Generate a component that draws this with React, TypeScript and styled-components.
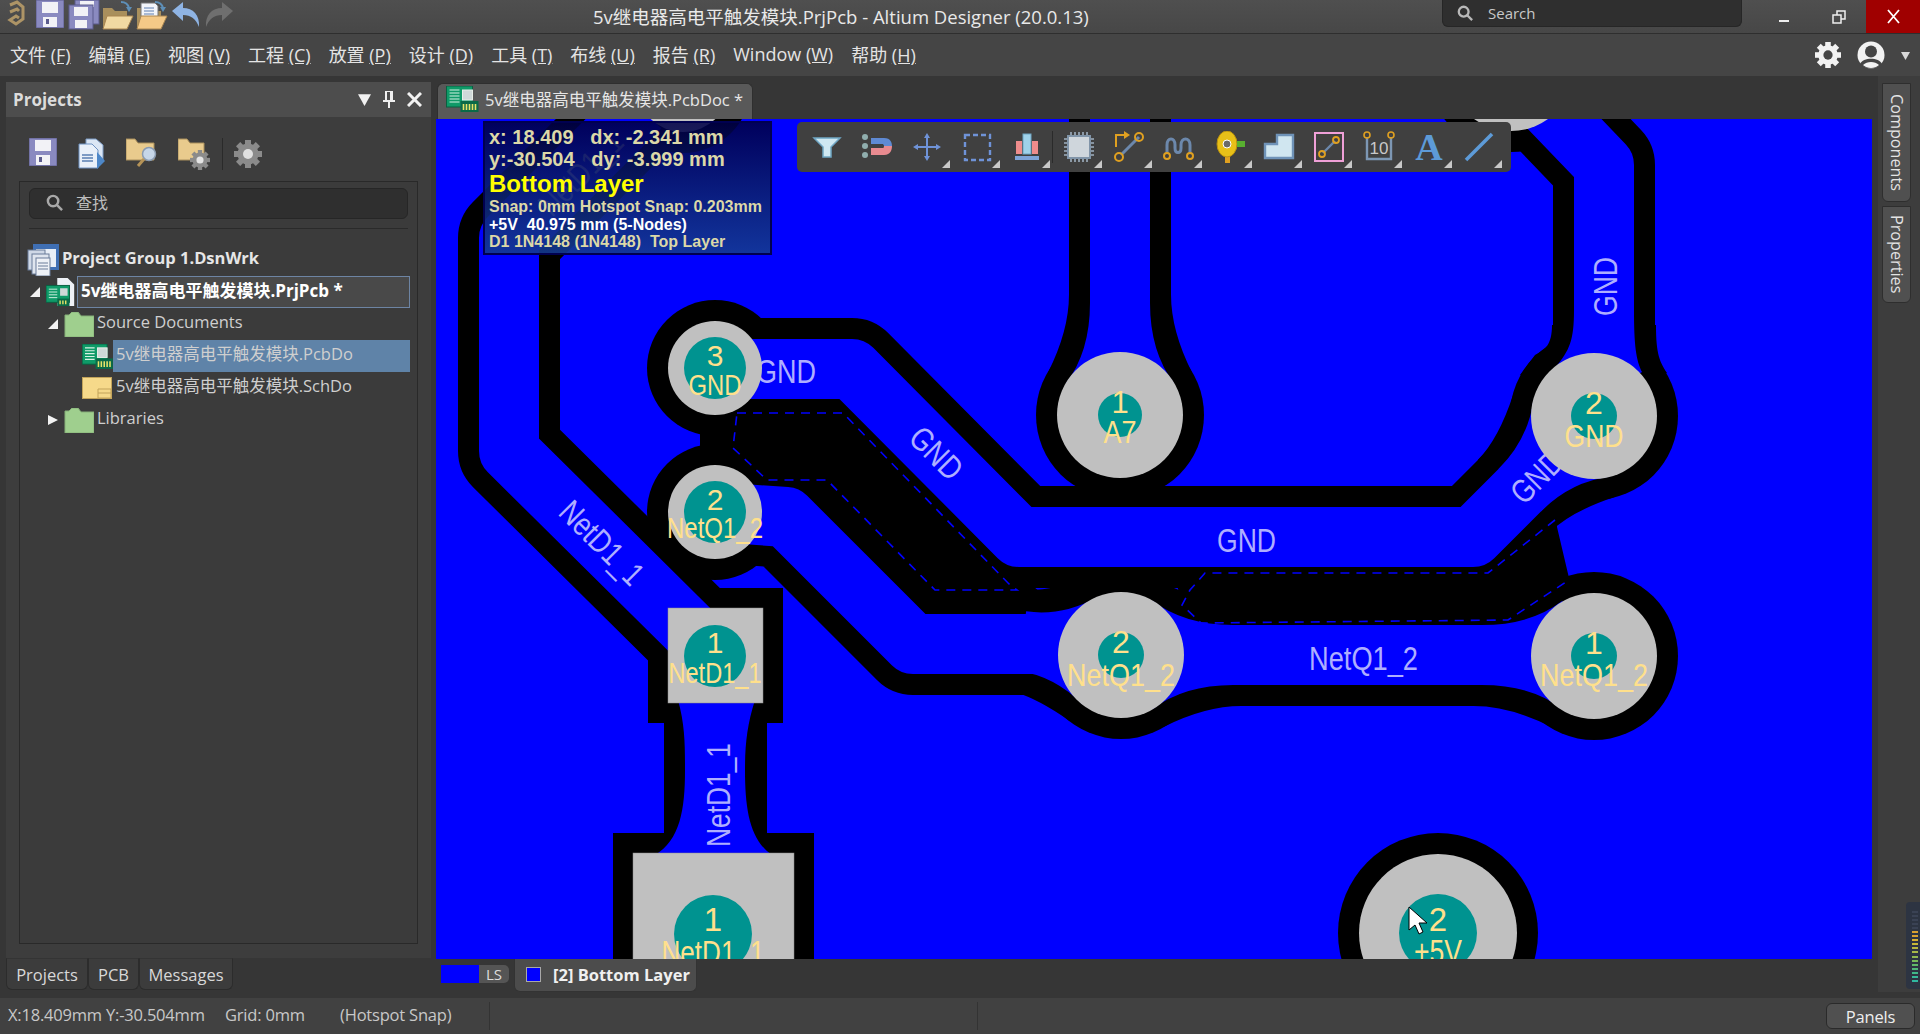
import styled, { createGlobalStyle } from "styled-components";

const UI = `"Open Sans", "Noto Sans CJK SC", sans-serif`;
const PCB_BLUE = "#0000ff";

const GlobalStyle = createGlobalStyle`
  html, body { margin: 0; padding: 0; background: #363636; }
  body { font-family: ${UI}; overflow: hidden; }
`;

const Screen = styled.div`
  width: 1920px;
  height: 1034px;
  display: flex;
  flex-direction: column;
  background: #363636;
  color: #e4e4e4;
  overflow: hidden;
`;

/* title bar */
const TitleBar = styled.div`
  height: 33px;
  flex: none;
  display: flex;
  background: linear-gradient(#4f4f4f, #474747);
  border-bottom: 1px solid #2e2e2e;
`;
const QuickBar = styled.div`
  width: 593px;
  flex: none;
  display: flex;
  align-items: flex-start;
  padding-left: 7px;
  box-sizing: border-box;
`;
const QuickIcon = styled.span<{ $w: number }>`
  width: ${(p) => p.$w}px;
  height: 30px;
  display: block;
  margin-right: 3px;
`;
const AppTitle = styled.div`
  font-size: 18.5px;
  line-height: 33px;
  color: #e8e8e8;
  white-space: nowrap;
`;
const SearchBox = styled.div`
  width: 300px;
  height: 27px;
  margin-left: auto;
  display: flex;
  align-items: center;
  gap: 15px;
  padding-left: 14px;
  box-sizing: border-box;
  background: #2f2f2f;
  border: 1px solid #262626;
  border-top: 0;
  border-radius: 0 0 6px 6px;
  font-size: 15px;
  color: #c8c8c8;
`;
const WindowControls = styled.div`
  width: 178px;
  display: flex;
  justify-content: flex-end;
`;
const WindowButton = styled.div<{ $close?: boolean }>`
  width: ${(p) => (p.$close ? 54 : 55)}px;
  display: flex;
  align-items: center;
  justify-content: center;
  background: ${(p) => (p.$close ? "#a00000" : "transparent")};
  color: #fff;
  font-size: 18px;
`;

/* menu bar */
const MenuBar = styled.div`
  height: 42px;
  flex: none;
  display: flex;
  align-items: center;
  padding-left: 10px;
  background: #454545;
  box-sizing: border-box;
`;
const MenuItem = styled.div`
  font-size: 18px;
  color: #e4e4e4;
  margin-right: 18px;
  padding-bottom: 2px;
  white-space: nowrap;
`;
const MenuRight = styled.div`
  margin-left: auto;
  display: flex;
  align-items: center;
  gap: 16px;
  padding-right: 10px;
`;

/* main area */
const Body = styled.div`
  flex: 1;
  display: flex;
  min-height: 0;
`;
const LeftColumn = styled.div`
  width: 436px;
  flex: none;
  display: flex;
  flex-direction: column;
  padding: 6px 5px 8px 6px;
  box-sizing: border-box;
`;
const Panel = styled.div`
  flex: 1;
  display: flex;
  flex-direction: column;
  background: #3d3d3d;
  min-height: 0;
`;
const PanelHeader = styled.div`
  height: 35px;
  flex: none;
  display: flex;
  align-items: center;
  padding: 0 9px 0 7px;
  background: #4d4d4d;
  font-size: 17px;
  font-weight: 700;
  color: #dcdcdc;
`;
const HeaderIcons = styled.div`
  margin-left: auto;
  display: flex;
  align-items: center;
  gap: 12px;
`;
const PanelTools = styled.div`
  height: 64px;
  flex: none;
  display: flex;
  align-items: center;
  padding: 10px 0 0 23px;
  box-sizing: border-box;
`;
const PanelTool = styled.span<{ $w: number }>`
  width: ${(p) => p.$w}px;
  height: 32px;
  display: block;
  margin-right: 20px;
`;
const ToolDivider = styled.span`
  width: 1px;
  height: 32px;
  margin: 0 11px 0 -8px;
  background: #2a2a2a;
`;
const TreeFrame = styled.div`
  flex: 1;
  margin: 0 13px 14px;
  border: 1px solid #292929;
  display: flex;
  flex-direction: column;
  background: #3b3b3b;
`;
const FindField = styled.div`
  height: 31px;
  flex: none;
  margin: 6px 9px 0;
  display: flex;
  align-items: center;
  gap: 13px;
  padding: 0 0 3px 16px;
  background: #2f2f2f;
  border: 1px solid #262626;
  border-radius: 6px;
  box-sizing: border-box;
  font-size: 16px;
  color: #bdbdbd;
`;
const FindRule = styled.div`
  height: 1px;
  flex: none;
  margin: 9px 9px 15px;
  background: #2a2a2a;
`;
const TreeRow = styled.div<{ $indent: number; $strong?: boolean; $large?: boolean }>`
  height: 32px;
  flex: none;
  display: flex;
  align-items: center;
  padding-left: ${(p) => p.$indent}px;
  font-size: ${(p) => (p.$large ? 17 : 16.5)}px;
  font-weight: ${(p) => (p.$strong ? 700 : 400)};
  color: ${(p) => (p.$strong ? "#e6e6e6" : "#cfcfcf")};
  white-space: nowrap;
`;
const Twist = styled.span<{ $open?: boolean }>`
  width: 10px;
  height: 10px;
  flex: none;
  margin-right: 6px;
  background: #f2f2f2;
  clip-path: ${(p) =>
    p.$open
      ? "polygon(100% 0, 100% 100%, 0 100%)"
      : "polygon(0 0, 100% 50%, 0 100%)"};
`;
const TreeIcon = styled.span<{ $w: number }>`
  width: ${(p) => p.$w}px;
  height: 30px;
  flex: none;
  display: flex;
  align-items: center;
`;
const TreeLabel = styled.div<{ $kind?: "focus" | "selected" }>`
  flex: ${(p) => (p.$kind ? 1 : "none")};
  height: 100%;
  display: flex;
  align-items: center;
  margin-right: ${(p) => (p.$kind ? "7px" : "0")};
  padding: 0 0 6px 3px;
  box-sizing: border-box;
  color: ${(p) => (p.$kind === "focus" ? "#fff" : "inherit")};
  background: ${(p) =>
    p.$kind === "focus"
      ? "#494949"
      : p.$kind === "selected"
        ? "#5f83a8"
        : "transparent"};
  border: ${(p) => (p.$kind === "focus" ? "1px solid #6d84a3" : "0")};
`;
const BottomTabs = styled.div`
  height: 32px;
  flex: none;
  display: flex;
`;
const BottomTab = styled.div<{ $w: number }>`
  width: ${(p) => p.$w}px;
  display: flex;
  align-items: center;
  justify-content: center;
  box-sizing: border-box;
  font-size: 16.5px;
  color: #d8d8d8;
  background: #3c3c3c;
  border: 1px solid #2c2c2c;
  border-top-color: #343434;
  border-radius: 0 0 6px 6px;
`;

const CenterColumn = styled.div`
  width: 1436px;
  flex: none;
  display: flex;
  flex-direction: column;
  padding-top: 7px;
  box-sizing: border-box;
`;
const DocStrip = styled.div`
  height: 36px;
  flex: none;
  display: flex;
`;
const DocTab = styled.div`
  margin-left: 1px;
  width: 316px;
  display: flex;
  align-items: center;
  gap: 6px;
  padding: 0 0 5px 8px;
  box-sizing: border-box;
  background: #595959;
  border: 1px solid #2f2f2f;
  border-bottom: 0;
  border-radius: 6px 6px 0 0;
  font-size: 16.5px;
  color: #e6e6e6;
  white-space: nowrap;
`;
const Canvas = styled.div`
  height: 840px;
  flex: none;
  position: relative;
  overflow: hidden;
  background: ${PCB_BLUE};
`;
const BoardSvg = styled.svg`
  display: block;
  width: 1436px;
  height: 840px;
`;
const NetLabel = styled.text`
  font-family: "Liberation Sans", sans-serif;
  fill: #aeaeff;
`;
const PadLabel = styled.text`
  font-family: "Liberation Sans", sans-serif;
  fill: #ffe08c;
`;

const HeadsUp = styled.div`
  position: absolute;
  left: 47px;
  top: 2px;
  width: 289px;
  height: 134px;
  box-sizing: border-box;
  padding: 3px 0 0 4px;
  border: 2px solid #000050;
  background: linear-gradient(rgba(0, 0, 70, 0.88), rgba(20, 58, 145, 0.9));
  font-family: "Liberation Sans", sans-serif;
  font-weight: 700;
  color: #dcd8a8;
  white-space: pre;
`;
const HudLine = styled.div<{ $size: number; $height: number; $color?: string }>`
  font-size: ${(p) => p.$size}px;
  line-height: ${(p) => p.$height}px;
  color: ${(p) => p.$color || "inherit"};
`;

const Toolbar = styled.div`
  position: absolute;
  left: 361px;
  top: 3px;
  height: 50px;
  display: flex;
  align-items: center;
  padding: 0 7px 0 5px;
  border-radius: 5px;
  background: #404040;
`;
const ToolCell = styled.div<{ $corner?: boolean }>`
  width: 50px;
  height: 50px;
  display: flex;
  align-items: center;
  justify-content: center;
  position: relative;
  &::after {
    content: "";
    display: ${(p) => (p.$corner ? "block" : "none")};
    position: absolute;
    right: 2px;
    bottom: 4px;
    width: 8px;
    height: 8px;
    background: #c9c9c9;
    clip-path: polygon(100% 0, 100% 100%, 0 100%);
  }
`;
const ToolSep = styled.div`
  width: 1px;
  height: 32px;
  margin: 0 1px 0 0;
  background: #2a2a2a;
`;
const ToolSlot = styled.div`
  display: contents;
`;

const LayerStrip = styled.div`
  height: 39px;
  flex: none;
  display: flex;
  padding-left: 5px;
`;
const LayerSwatch = styled.div`
  width: 38px;
  height: 18px;
  margin-top: 6px;
  background: ${PCB_BLUE};
`;
const LsButton = styled.div`
  width: 30px;
  height: 18px;
  margin: 6px 5px 0 0;
  display: flex;
  align-items: center;
  justify-content: center;
  background: #555;
  border-radius: 0 5px 5px 0;
  font-size: 15px;
  color: #ddd;
`;
const LayerTab = styled.div`
  width: 183px;
  height: 33px;
  display: flex;
  align-items: center;
  gap: 12px;
  padding: 0 0 2px 11px;
  box-sizing: border-box;
  background: #4c4c4c;
  border: 1px solid #333;
  border-top: 0;
  border-radius: 0 0 6px 6px;
  font-size: 16.5px;
  font-weight: 700;
  color: #f0f0f0;
  white-space: nowrap;
`;
const LayerDot = styled.span`
  width: 15px;
  height: 15px;
  flex: none;
  box-sizing: border-box;
  background: ${PCB_BLUE};
  border: 1px solid #a8a8a8;
`;

const Rail = styled.div`
  flex: 1;
  margin: 0 0 6px 6px;
  display: flex;
  flex-direction: column;
  align-items: flex-start;
  gap: 4px;
  padding: 7px 0 3px 4px;
  background: #3d3d3d;
`;
const RailTab = styled.div<{ $h: number }>`
  width: 29px;
  height: ${(p) => p.$h}px;
  flex: none;
  box-sizing: border-box;
  display: flex;
  align-items: center;
  justify-content: center;
  writing-mode: vertical-rl;
  background: #505050;
  border: 1px solid #2e2e2e;
  border-radius: 0 0 6px 6px;
  font-size: 16.2px;
  color: #e4e4e4;
`;
const Meter = styled.div`
  margin: auto 0 0 24px;
  width: 14px;
  height: 87px;
  flex: none;
  box-sizing: border-box;
  padding: 9px 2px 7px 6px;
  display: flex;
  flex-direction: column;
  justify-content: space-between;
  background: #2d3442;
  border-radius: 4px 0 0 4px;
`;
const MeterTick = styled.span<{ $color: string }>`
  height: 2px;
  background: ${(p) => p.$color};
`;

const StatusBar = styled.div`
  height: 36px;
  flex: none;
  display: flex;
  align-items: center;
  background: #414141;
  font-size: 16.5px;
  color: #c8c8c8;
  letter-spacing: -0.2px;
  white-space: nowrap;
`;
const StatusText = styled.span<{ $w: number; $pad?: number }>`
  width: ${(p) => p.$w}px;
  flex: none;
  box-sizing: border-box;
  padding: 0 0 3px ${(p) => p.$pad || 0}px;
`;
const StatusDivider = styled.span<{ $w: number }>`
  width: ${(p) => p.$w}px;
  height: 28px;
  flex: none;
  box-sizing: border-box;
  border-left: 1px solid #333;
`;
const PanelsButton = styled.div`
  width: 89px;
  height: 26px;
  margin: 0 5px 0 auto;
  display: flex;
  align-items: center;
  justify-content: center;
  background: #505050;
  border: 1px solid #2a2a2a;
  border-radius: 6px;
  box-sizing: border-box;
  color: #eee;
`;

/* ---- icons ---- */
const SaveIcon = () => (
  <svg width="28" height="28" viewBox="0 0 28 28">
    <rect x="0" y="0" width="28" height="28" fill="#8a8ac0" stroke="#5b5b8c" />
    <rect x="6" y="2" width="16" height="11" fill="#f2f2f6" />
    <rect x="7" y="17" width="14" height="10" fill="#f2f2f6" />
    <rect x="10" y="19" width="3" height="5" fill="#5b5b8c" />
  </svg>
);
const SaveAllIcon = () => (
  <svg width="32" height="30" viewBox="0 0 32 30">
    <rect x="7" y="0" width="24" height="24" fill="#8a8ac0" stroke="#5b5b8c" />
    <rect x="12" y="1" width="14" height="6" fill="#f2f2f6" />
    <rect x="1" y="5" width="24" height="24" fill="#8a8ac0" stroke="#5b5b8c" />
    <rect x="6" y="7" width="14" height="9" fill="#f2f2f6" />
    <rect x="7" y="20" width="12" height="8" fill="#f2f2f6" />
  </svg>
);
const FolderOpen = ({ doc }: { doc?: boolean }) => (
  <svg width="32" height="30" viewBox="0 0 32 30">
    <path d="M1 8h9l3 3h12v17H1z" fill="#a98f5c" />
    {doc && <path d="M5 3h14l3 3v15H5z" fill="#f3f5fa" stroke="#777" />}
    {doc && <path d="M8 8h10M8 11h10M8 14h10" stroke="#5e7fb0" />}
    <path d="M5 16h26l-6 13H1z" fill={doc ? "#f4c987" : "#f1d9a2"} stroke="#a98550" />
    <path d="M19 2c4 0 7 2 8 6" fill="none" stroke="#5d8fb8" strokeWidth="2" />
    <path d="M24 7l6 0-3 5z" fill="#5d8fb8" />
  </svg>
);
const ArrowIcon = ({ color, flip }: { color: string; flip?: boolean }) => (
  <svg width="30" height="28" viewBox="0 0 30 28" style={flip ? { transform: "scaleX(-1)" } : undefined}>
    <path d="M1 11 12 2v6c10 0 17 7 16 19-3-8-8-12-16-12v6z" fill={color} />
  </svg>
);
const Logo = () => (
  <svg width="18" height="26" viewBox="0 0 18 26" fill="none" stroke="#ad9466" strokeWidth="3">
    <path d="M3 5l7-3 6 5v12l-7 5-6-4 6-4 3 2" />
    <path d="M3 12l7-3 2 2" />
  </svg>
);
const SearchGlass = ({ color, size }: { color: string; size: number }) => (
  <svg width={size} height={size} viewBox="0 0 18 18" fill="none" stroke={color} strokeWidth="2.6">
    <circle cx="7.5" cy="7.5" r="5.5" />
    <path d="M11.5 11.5 17 17" />
  </svg>
);
const Gear = ({ color, size, ring }: { color: string; size: number; ring?: string }) => (
  <svg width={size} height={size} viewBox="0 0 28 28">
    <g fill={color}>
      {[0, 45, 90, 135, 180, 225, 270, 315].map((a) => (
        <rect key={a} x="11" y="0" width="6" height="8" transform={`rotate(${a} 14 14)`} />
      ))}
      <circle cx="14" cy="14" r="10.5" />
    </g>
    <circle cx="14" cy="14" r="5" fill={ring || "#454545"} />
  </svg>
);
const UserIcon = () => (
  <svg width="28" height="28" viewBox="0 0 28 28">
    <circle cx="14" cy="14" r="13.5" fill="#f2f2f2" />
    <circle cx="14" cy="10.5" r="6" fill="#454545" />
    <path d="M3 23c3-7 19-7 22 0-5 6-17 6-22 0z" fill="#454545" />
    <path d="M6 24c4-4 12-4 16 0-4 4-12 4-16 0z" fill="#f2f2f2" />
  </svg>
);
const PcbIcon = ({ w = 33, h = 26 }: { w?: number; h?: number }) => (
  <svg width={w} height={h} viewBox="0 0 32 26">
    <rect x="0" y="0" width="26" height="21" fill="#0f9a68" stroke="#0a5f40" />
    <path d="M3 4h10M3 7h10M3 10h10M3 13h10M3 16h10" stroke="#d6f2e4" strokeWidth="1.2" />
    <rect x="16" y="4" width="10" height="10" fill="#cfd8d8" stroke="#e8eee8" />
    <rect x="14" y="15" width="18" height="11" fill="#0a6a48" />
    <path d="M17 18v6M20 18v6M23 18v6M26 18v6M29 18v6" stroke="#e8e468" strokeWidth="1.6" />
  </svg>
);
const GreenFolder = () => (
  <svg width="30" height="25" viewBox="0 0 30 25">
    <path d="M1 3h4l3-3h6l3 4h13v21H1z" fill="#9fcf8e" stroke="#86b078" />
  </svg>
);
const SchIcon = () => (
  <svg width="30" height="22" viewBox="0 0 30 22">
    <rect x="0.5" y="0.5" width="29" height="21" fill="#f6d98a" stroke="#c2a35a" />
    <path d="M16 12h13v9H16zM16 16h13" fill="none" stroke="#c2a35a" />
  </svg>
);
const GroupIcon = () => (
  <svg width="32" height="32" viewBox="0 0 32 32">
    <rect x="6" y="0" width="26" height="26" fill="#3f6fb4" />
    <rect x="9" y="5" width="20" height="18" fill="#e8eef6" />
    <rect x="1" y="6" width="17" height="20" fill="#cfd8e6" stroke="#6b7c99" />
    <rect x="5" y="10" width="17" height="20" fill="#dfe5ee" stroke="#6b7c99" />
    <rect x="9" y="14" width="14" height="18" fill="#eef1f6" stroke="#6b7c99" />
    <path d="M11 19h10M11 22h10M11 25h10" stroke="#6b7c99" />
  </svg>
);
const ProjectIcon = () => (
  <svg width="33" height="30" viewBox="0 0 33 30">
    <path d="M12 0h11l7 7v23H12z" fill="#eef1f6" />
    <g transform="translate(0 8)">
      <rect x="0" y="0" width="25" height="18" fill="#0f9a68" stroke="#0a5f40" />
      <path d="M3 4h9M3 7h9M3 10h9M3 13h9" stroke="#d6f2e4" />
      <rect x="15" y="3" width="8" height="8" fill="#cfd8d8" />
      <rect x="12" y="14" width="13" height="8" fill="#0a6a48" />
      <path d="M15 16v4M18 16v4M21 16v4" stroke="#e8e468" strokeWidth="1.5" />
    </g>
  </svg>
);
const DocsIcon = () => (
  <svg width="28" height="32" viewBox="0 0 28 32">
    <path d="M8 1h10l7 6v15H8z" fill="#dbe6f4" stroke="#7d9cc6" />
    <path d="M1 6h13l6 6v18H1z" fill="#e9f0f9" stroke="#6f92c2" />
    <path d="M4 17h11M4 20h11M4 23h11" stroke="#5a7fb2" strokeWidth="1.3" />
    <path d="M19 14l8 9-8 8z" fill="#4d87c8" />
  </svg>
);
const FolderSearch = () => (
  <svg width="32" height="32" viewBox="0 0 32 32">
    <path d="M0 1h9l3 4h16v17H0z" fill="#e9cb8d" stroke="#a98f5c" />
    <circle cx="23" cy="16" r="6.5" fill="#c6d6e8" stroke="#8a9bb0" strokeWidth="1.5" />
    <path d="M18 21l-6 7" stroke="#b59357" strokeWidth="3" />
  </svg>
);
const FolderGear = () => (
  <svg width="32" height="32" viewBox="0 0 32 32">
    <path d="M0 1h9l3 4h14v17H0z" fill="#e9cb8d" stroke="#a98f5c" />
    <g transform="translate(12 12)">
      <Gear color="#8b8b8b" size={20} ring="#e4e4e4" />
    </g>
  </svg>
);
const PinIcon = () => (
  <svg width="12" height="17" viewBox="0 0 12 17">
    <path d="M2 0h8v9h2v2H0V9h2z M5 11h2v6H5z" fill="#f0f0f0" />
    <rect x="4" y="1" width="3" height="8" fill="#4d4d4d" />
  </svg>
);
const CloseCross = () => (
  <svg width="15" height="15" viewBox="0 0 15 15" stroke="#f2f2f2" strokeWidth="3">
    <path d="M1 1 14 14M14 1 1 14" />
  </svg>
);
const DownTri = ({ size, color }: { size: number; color: string }) => (
  <svg width={size} height={size} viewBox="0 0 10 10">
    <path d="M0 1h10L5 10z" fill={color} />
  </svg>
);

const toolIcons = [
  <g key="filter">
    <path d="M3 7h26L20 16v10h-8V16z" fill="#cfe8f2" stroke="#6fa6c4" strokeWidth="1.5" />
  </g>,
  <g key="magnet" fill="none">
    <circle cx="4" cy="6" r="3" fill="#90aeae" />
    <circle cx="4" cy="15" r="3" fill="#90aeae" />
    <circle cx="4" cy="24" r="3" fill="#90aeae" />
    <path d="M10 7h13c7 0 8 5 8 8H23c0-1-1-2-1-2H10z" fill="#5f8ad4" />
    <path d="M10 17h12c0 0 1 0 1-2h8c0 3-1 9-8 9H10z" fill="#e88a90" />
  </g>,
  <g key="cross" stroke="#6f93d8" strokeWidth="2" fill="#6f93d8">
    <path d="M4 16h24M16 4v24" />
    <path d="M2 16l5-3v6zM30 16l-5-3v6zM16 2l-3 5h6zM16 30l-3-5h6z" stroke="none" />
  </g>,
  <rect key="sel" x="4" y="4" width="25" height="25" fill="none" stroke="#6f93d8" strokeWidth="2.4" strokeDasharray="5 3" />,
  <g key="align">
    <rect x="5" y="10" width="6" height="13" fill="#ee8c8c" />
    <rect x="12" y="3" width="8" height="20" fill="#9fd2ea" stroke="#6fa6c4" />
    <rect x="21" y="10" width="6" height="13" fill="#ee8c8c" />
    <rect x="4" y="25" width="24" height="4" fill="#7ea4d8" />
  </g>,
  <g key="chip">
    <path d="M8 1v30M12 1v30M16 1v30M20 1v30M24 1v30M1 8h30M1 12h30M1 16h30M1 20h30M1 24h30" stroke="#9fb0c0" strokeWidth="1.6" />
    <rect x="5" y="5" width="22" height="22" fill="#cfd6dc" stroke="#8094a8" strokeWidth="2" />
  </g>,
  <g key="route" fill="none">
    <path d="M8 24 26 6" stroke="#6c88ac" strokeWidth="3" />
    <circle cx="6" cy="26" r="4" stroke="#e0a020" strokeWidth="2" />
    <circle cx="26" cy="6" r="4" stroke="#e0a020" strokeWidth="2" />
    <path d="M3 16V4h9" stroke="#e0a020" strokeWidth="2" />
    <path d="M11 0l6 4-6 4z" fill="#e0a020" />
  </g>,
  <g key="wave" fill="none">
    <path d="M4 22V14c0-8 8-8 8 0v3c0 6 6 6 6 0v-3c0-8 9-8 9 0v8" stroke="#6c88ac" strokeWidth="3" />
    <circle cx="4" cy="25" r="3" stroke="#e0a020" strokeWidth="2" />
    <circle cx="27" cy="25" r="3" stroke="#e0a020" strokeWidth="2" />
  </g>,
  <g key="via">
    <rect x="12" y="22" width="5" height="10" fill="#e0a020" />
    <ellipse cx="14" cy="13" rx="10" ry="13" fill="#e8c018" stroke="#b89010" />
    <circle cx="14" cy="13" r="4" fill="#6a6a6a" stroke="#fff" />
    <rect x="24" y="10" width="8" height="6" fill="#58b030" />
  </g>,
  <path key="poly" d="M2 27V13h12V4h16v23z" fill="#d0e6f0" stroke="#6f93b8" strokeWidth="2.4" />,
  <g key="rule" fill="none">
    <rect x="2" y="2" width="28" height="28" stroke="#f0a0d8" strokeWidth="2" />
    <path d="M10 22 22 10" stroke="#6c88ac" strokeWidth="2.4" />
    <circle cx="9" cy="23" r="3" stroke="#e0a020" strokeWidth="1.8" />
    <circle cx="23" cy="9" r="3" stroke="#e0a020" strokeWidth="1.8" />
  </g>,
  <g key="dim" fill="none">
    <path d="M4 6v22h24V6" stroke="#7d97b4" strokeWidth="2.4" />
    <circle cx="4" cy="4" r="3" stroke="#e0a020" strokeWidth="1.6" />
    <circle cx="28" cy="4" r="3" stroke="#e0a020" strokeWidth="1.6" />
    <text x="16" y="23" textAnchor="middle" fontSize="17" fontFamily="Liberation Sans" fill="#c8c8c8" stroke="none">10</text>
  </g>,
  <text key="a" x="16" y="29" textAnchor="middle" fontSize="38" fontWeight="700" fontFamily="Liberation Serif" fill="#5d9bd8">A</text>,
  <path key="line" d="M3 29 29 3" stroke="#5d9bd8" strokeWidth="3.6" />,
];

/* ---- board ---- */
const gndMain = "M715 369 L852 369 L1019 537 L1473 537 L1594 416";
const gndUp = "M1594 416 L1604 385 L1604 165 L1511 68";
const a7Trace = "M1120 415 L1120 100";
const netQLeft = "M715 512 L786 517 L913 644 L1040 644 L1121 655";
const netQRight = "M1121 655 L1594 655";
const netDLong = "M715 655 L509 451 L509 238 L640 107";
const traces = [gndMain, gndUp, a7Trace, netQLeft, netQRight, netDLong];

const tears = [
  { x: 1120, y: 415, r: 63, len: 112, rot: -90 },
  { x: 1594, y: 416, r: 63, len: 105, rot: 135 },
  { x: 1121, y: 655, r: 63, len: 112, rot: 0 },
  { x: 1121, y: 655, r: 63, len: 100, rot: 188 },
  { x: 1594, y: 655, r: 63, len: 112, rot: 180 },
];

const Tear = ({ x, y, r, len, rot, grow, fill }: { x: number; y: number; r: number; len: number; rot: number; grow: number; fill: string }) => {
  const R = r + grow;
  const hw = 30 + grow;
  const L = len + grow * 0.4;
  return (
    <path
      transform={`translate(${x} ${y}) rotate(${rot})`}
      fill={fill}
      d={`M${R * 0.5} ${-R * 0.86} Q${R} ${-hw} ${L} ${-hw} L${L} ${hw} Q${R} ${hw} ${R * 0.5} ${R * 0.86} Z`}
    />
  );
};

type PadData = { x: number; y: number; r: number; hole: number; num?: string; name?: string; w?: number; fs?: number; square?: boolean; dn?: number };
const pads: PadData[] = [
  { x: 683, y: 85, r: 47, hole: 31 },
  { x: 1511, y: 68, r: 63, hole: 23 },
  { x: 715, y: 368, r: 47, hole: 31, num: "3", name: "GND", w: 53, fs: 30, dn: 27 },
  { x: 715, y: 512, r: 47, hole: 31, num: "2", name: "NetQ1_2", w: 96, fs: 30, dn: 26 },
  { x: 715, y: 655, r: 47, hole: 31, num: "1", name: "NetD1_1", w: 93, fs: 30, dn: 28, square: true },
  { x: 713, y: 933, r: 80, hole: 39, num: "1", name: "NetD1_1", w: 103, fs: 33, dn: 31, square: true },
  { x: 1120, y: 415, r: 63, hole: 22, num: "1", name: "A7", w: 33, fs: 31, dn: 28 },
  { x: 1594, y: 416, r: 63, hole: 23, num: "2", name: "GND", w: 59, fs: 32, dn: 31 },
  { x: 1121, y: 655, r: 63, hole: 23, num: "2", name: "NetQ1_2", w: 108, fs: 32, dn: 31 },
  { x: 1594, y: 656, r: 63, hole: 23, num: "1", name: "NetQ1_2", w: 108, fs: 32, dn: 30 },
  { x: 1438, y: 933, r: 79, hole: 39, num: "2", name: "+5V", w: 48, fs: 33, dn: 30 },
];

const Label = ({ x, y, rot, text, w, fs = 33 }: { x: number; y: number; rot: number; text: string; w: number; fs?: number }) => (
  <NetLabel
    transform={`translate(${x} ${y}) rotate(${rot})`}
    fontSize={fs}
    textLength={w}
    lengthAdjust="spacingAndGlyphs"
  >
    {text}
  </NetLabel>
);

const Board = () => (
  <BoardSvg viewBox="436 119 1436 840">
    <rect x="436" y="119" width="1436" height="840" fill={PCB_BLUE} />
    {/* clearance */}
    <g fill="#000">
      {traces.map((d) => (
        <path key={d} d={d} fill="none" stroke="#000" strokeWidth="102" strokeLinejoin="round" />
      ))}
      {tears.map((t, i) => (
        <Tear key={i} {...t} grow={21} fill="#000" />
      ))}
      {pads.map((p) =>
        p.square ? (
          <rect key={p.x + "-" + p.y} x={p.x - p.r - 20} y={p.y - p.r - 20} width={(p.r + 20) * 2 + 1} height={(p.r + 20) * 2 + 1} />
        ) : (
          <circle key={p.x + "-" + p.y} cx={p.x} cy={p.y} r={p.r + 21} />
        ),
      )}
      <rect x="700" y="425" width="60" height="35" />
      <path d="M725 399 L842 399 L1010 567 L1040 592 L925 613 L805 492 L735 487 Z" />
      <path d="M1170 560 L1495 560 L1555 497 L1557 527 L1569 578 L1530 612 L1500 632 L1190 632 Z" />
      <path d="M664 703 H767 V853 H664 Z" />
      <path d="M1552 325 C1552 345 1545 350 1535 355 L1520 375 L1600 400 L1667 373 C1660 362 1656 355 1656 325 Z" />
    </g>
    {/* copper */}
    {traces.map((d) => (
      <path key={d} d={d} fill="none" stroke={PCB_BLUE} strokeWidth="60" strokeLinejoin="round" />
    ))}
    {tears.map((t, i) => (
      <Tear key={i} {...t} grow={0} fill={PCB_BLUE} />
    ))}
    <path fill={PCB_BLUE} d="M1574 310 C1574 340 1570 350 1555 368 L1600 400 L1642 372 C1636 360 1634 345 1634 310 Z" />
    <path fill={PCB_BLUE} d="M678 700 C685 725 685 745 685 770 C685 810 680 840 655 855 L772 855 C750 840 745 810 745 770 C745 745 747 725 755 700 Z" />
    <g fill="none" stroke={PCB_BLUE} strokeWidth="1.6" strokeDasharray="9 7">
      <path d="M737 413 L843 413 L1009 584 L1017 590 L935 590 L827 480 L767 480 L733 448 Z" />
      <path d="M1555 520 L1488 573 L1205 573 L1190 590 L1182 605 L1201 623 L1508 620 L1569 580" />
    </g>
    {/* net names */}
    <Label x={756} y={383} rot={0} text="GND" w={60} />
    <Label x={907} y={440} rot={45} text="GND" w={60} />
    <Label x={1217} y={552} rot={0} text="GND" w={59} />
    <Label x={1309} y={670} rot={0} text="NetQ1_2" w={109} />
    <Label x={1617} y={316} rot={-90} text="GND" w={59} />
    <Label x={1524} y={506} rot={-45} text="GND" w={59} />
    <Label x={730} y={847} rot={-90} text="NetD1_1" w={104} />
    <Label x={557} y={514} rot={45} text="NetD1_1" w={104} />
    <Label x={552} y={218} rot={-45} text="NetD1_1" w={104} />
    {/* pads */}
    {pads.map((p) => (
      <g key={p.x + "-" + p.y}>
        {p.square ? (
          <rect x={p.x - p.r} y={p.y - p.r} width={p.r * 2 + 1} height={p.r * 2 + 1} fill="#c0c0c0" stroke="#8a8a8a" strokeWidth="0.5" />
        ) : (
          <circle cx={p.x} cy={p.y} r={p.r} fill="#c0c0c0" />
        )}
        <circle cx={p.x} cy={p.y + (p.square ? 1 : 0)} r={p.hole} fill="#009390" />
        {p.num && (
          <PadLabel x={p.x} y={p.y - 2} fontSize={p.fs} textAnchor="middle">
            {p.num}
          </PadLabel>
        )}
        {p.name && (
          <PadLabel
            x={p.x - (p.w || 0) / 2}
            y={p.y + (p.dn || 27)}
            fontSize={p.fs}
            textLength={p.w}
            lengthAdjust="spacingAndGlyphs"
          >
            {p.name}
          </PadLabel>
        )}
      </g>
    ))}
    {/* mouse pointer */}
    <path d="M1409 907 V930 L1415 925 L1419 934 L1423 932 L1419 923 L1427 923 Z" fill="#fff" stroke="#000" strokeWidth="1" />
  </BoardSvg>
);

const menus: [string, string][] = [
  ["文件 ", "(F)"],
  ["编辑 ", "(E)"],
  ["视图 ", "(V)"],
  ["工程 ", "(C)"],
  ["放置 ", "(P)"],
  ["设计 ", "(D)"],
  ["工具 ", "(T)"],
  ["布线 ", "(U)"],
  ["报告 ", "(R)"],
  ["Window ", "(W)"],
  ["帮助 ", "(H)"],
];

const meterColors = [
  "#3a4254", "#3a4254", "#3a4254", "#3a4254", "#3a4254",
  "#d8a030", "#d8a030", "#d8b030", "#c8b838", "#b8b840", "#a8b848", "#90b850",
  "#78b858", "#60b868", "#50b878", "#40b888", "#38b898", "#30b8a0",
];

const App = () => {
  const cornerless = 2;
  return (
    <Screen>
      <GlobalStyle />
      <TitleBar>
        <QuickBar>
          <QuickIcon $w={26}><Logo /></QuickIcon>
          <QuickIcon $w={29}><SaveIcon /></QuickIcon>
          <QuickIcon $w={31}><SaveAllIcon /></QuickIcon>
          <QuickIcon $w={31}><FolderOpen /></QuickIcon>
          <QuickIcon $w={32}><FolderOpen doc /></QuickIcon>
          <QuickIcon $w={30}><ArrowIcon color="#8fb4e4" /></QuickIcon>
          <QuickIcon $w={30}><ArrowIcon color="#6f6f6f" flip /></QuickIcon>
        </QuickBar>
        <AppTitle>5v继电器高电平触发模块.PrjPcb - Altium Designer (20.0.13)</AppTitle>
        <SearchBox>
          <SearchGlass color="#b8b8b8" size={16} />
          Search
        </SearchBox>
        <WindowControls>
          <WindowButton>
            <svg width="12" height="12" viewBox="0 0 12 12"><rect x="1" y="9" width="10" height="2" fill="#eee" /></svg>
          </WindowButton>
          <WindowButton>
            <svg width="14" height="14" viewBox="0 0 14 14" fill="none" stroke="#eee" strokeWidth="1.5"><rect x="1" y="5" width="8" height="8" /><path d="M5 5V1h8v8H9" /></svg>
          </WindowButton>
          <WindowButton $close>
            <svg width="15" height="15" viewBox="0 0 15 15" stroke="#fff" strokeWidth="1.8"><path d="M2 1 13 14M13 1 2 14" /></svg>
          </WindowButton>
        </WindowControls>
      </TitleBar>

      <MenuBar>
        {menus.map(([name, key]) => (
          <MenuItem key={key}>
            {name}
            <u>{key}</u>
          </MenuItem>
        ))}
        <MenuRight>
          <Gear color="#f2f2f2" size={26} />
          <UserIcon />
          <DownTri size={9} color="#d8d8d8" />
        </MenuRight>
      </MenuBar>

      <Body>
        <LeftColumn>
          <Panel>
            <PanelHeader>
              Projects
              <HeaderIcons>
                <DownTri size={13} color="#f2f2f2" />
                <PinIcon />
                <CloseCross />
              </HeaderIcons>
            </PanelHeader>
            <PanelTools>
              <PanelTool $w={29}><SaveIcon /></PanelTool>
              <PanelTool $w={28}><DocsIcon /></PanelTool>
              <PanelTool $w={32}><FolderSearch /></PanelTool>
              <PanelTool $w={32}><FolderGear /></PanelTool>
              <ToolDivider />
              <Gear color="#8b8b8b" size={28} ring="#e0e0e0" />
            </PanelTools>
            <TreeFrame>
              <FindField>
                <SearchGlass color="#a8a8a8" size={17} />
                查找
              </FindField>
              <FindRule />
              <TreeRow $indent={7} $strong>
                <TreeIcon $w={32}><GroupIcon /></TreeIcon>
                <TreeLabel>Project Group 1.DsnWrk</TreeLabel>
              </TreeRow>
              <TreeRow $indent={10} $strong $large>
                <Twist $open />
                <TreeIcon $w={31}><ProjectIcon /></TreeIcon>
                <TreeLabel $kind="focus">5v继电器高电平触发模块.PrjPcb *</TreeLabel>
              </TreeRow>
              <TreeRow $indent={28}>
                <Twist $open />
                <TreeIcon $w={30}><GreenFolder /></TreeIcon>
                <TreeLabel>Source Documents</TreeLabel>
              </TreeRow>
              <TreeRow $indent={62}>
                <TreeIcon $w={31}><PcbIcon w={31} h={25} /></TreeIcon>
                <TreeLabel $kind="selected">5v继电器高电平触发模块.PcbDo</TreeLabel>
              </TreeRow>
              <TreeRow $indent={62}>
                <TreeIcon $w={31}><SchIcon /></TreeIcon>
                <TreeLabel>5v继电器高电平触发模块.SchDo</TreeLabel>
              </TreeRow>
              <TreeRow $indent={28}>
                <Twist />
                <TreeIcon $w={30}><GreenFolder /></TreeIcon>
                <TreeLabel>Libraries</TreeLabel>
              </TreeRow>
            </TreeFrame>
          </Panel>
          <BottomTabs>
            <BottomTab $w={82}>Projects</BottomTab>
            <BottomTab $w={51}>PCB</BottomTab>
            <BottomTab $w={94}>Messages</BottomTab>
          </BottomTabs>
        </LeftColumn>

        <CenterColumn>
          <DocStrip>
            <DocTab>
              <PcbIcon />
              5v继电器高电平触发模块.PcbDoc *
            </DocTab>
          </DocStrip>
          <Canvas>
            <Board />
            <HeadsUp>
              <HudLine $size={20} $height={22}>{"x: 18.409   dx: -2.341 mm"}</HudLine>
              <HudLine $size={20} $height={22}>{"y:-30.504   dy: -3.999 mm"}</HudLine>
              <HudLine $size={24} $height={28} $color="#ffff00">Bottom Layer</HudLine>
              <HudLine $size={16} $height={17.5}>Snap: 0mm Hotspot Snap: 0.203mm</HudLine>
              <HudLine $size={16} $height={17.5} $color="#ffffff">{"+5V  40.975 mm (5-Nodes)"}</HudLine>
              <HudLine $size={16} $height={17.5}>{"D1 1N4148 (1N4148)  Top Layer"}</HudLine>
            </HeadsUp>
            <Toolbar>
              {toolIcons.map((icon, i) => (
                <ToolSlot key={i}>
                  {i === 5 && <ToolSep />}
                  <ToolCell $corner={i >= cornerless}>
                    <svg width="32" height="32" viewBox="0 0 32 32">{icon}</svg>
                  </ToolCell>
                </ToolSlot>
              ))}
            </Toolbar>
          </Canvas>
          <LayerStrip>
            <LayerSwatch />
            <LsButton>LS</LsButton>
            <LayerTab>
              <LayerDot />
              [2] Bottom Layer
            </LayerTab>
          </LayerStrip>
        </CenterColumn>

        <Rail>
          <RailTab $h={119}>Components</RailTab>
          <RailTab $h={97}>Properties</RailTab>
          <Meter>
            {meterColors.map((c, i) => (
              <MeterTick key={i} $color={c} />
            ))}
          </Meter>
        </Rail>
      </Body>

      <StatusBar>
        <StatusText $w={225} $pad={8}>X:18.409mm Y:-30.504mm</StatusText>
        <StatusText $w={115}>Grid: 0mm</StatusText>
        <StatusText $w={149}>(Hotspot Snap)</StatusText>
        <StatusDivider $w={488} />
        <StatusDivider $w={1} />
        <PanelsButton>Panels</PanelsButton>
      </StatusBar>
    </Screen>
  );
};

export default App;
